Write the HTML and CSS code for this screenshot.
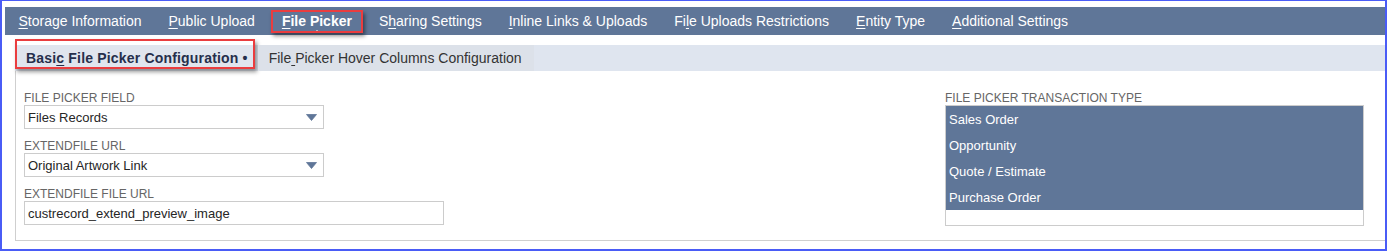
FILE: index.html
```html
<!DOCTYPE html>
<html>
<head>
<meta charset="utf-8">
<link rel="stylesheet" href="styles.css">
</head>
<body>
<div class="frame">
  <nav class="tabs">
    <span class="tab"><u>S</u>torage Information</span>
    <span class="tab"><u>P</u>ublic Upload</span>
    <span class="tab active"><u>F</u>ile Picker<span class="caret"></span></span>
    <span class="tab">S<u>h</u>aring Settings</span>
    <span class="tab"><u>I</u>nline Links &amp; Uploads</span>
    <span class="tab">Fi<u>l</u>e Uploads Restrictions</span>
    <span class="tab"><u>E</u>ntity Type</span>
    <span class="tab"><u>A</u>dditional Settings</span>
  </nav>
  <div class="subtabs">
    <span class="subtab active">Basi<u>c</u> File Picker Configuration •</span>
    <span class="subtab">File<u> </u>Picker Hover Columns Configuration</span>
  </div>
  <div class="panel">
    <div class="col col-left">
      <div class="field">
        <div class="label">FILE PICKER FIELD</div>
        <div class="select"><span>Files Records</span>
          <svg class="arrow" width="11" height="7" viewBox="0 0 11 7"><polygon points="0.5,0.5 10.5,0.5 5.5,6.5" fill="#5f7698" stroke="#5f7698" stroke-width="0.8" stroke-linejoin="round"/></svg>
        </div>
      </div>
      <div class="field">
        <div class="label">EXTENDFILE URL</div>
        <div class="select"><span>Original Artwork Link</span>
          <svg class="arrow" width="11" height="7" viewBox="0 0 11 7"><polygon points="0.5,0.5 10.5,0.5 5.5,6.5" fill="#5f7698" stroke="#5f7698" stroke-width="0.8" stroke-linejoin="round"/></svg>
        </div>
      </div>
      <div class="field">
        <div class="label">EXTENDFILE FILE URL</div>
        <div class="input">custrecord_extend_preview_image</div>
      </div>
    </div>
    <div class="col col-right">
      <div class="label">FILE PICKER TRANSACTION TYPE</div>
      <div class="listbox">
        <div class="opt">Sales Order</div>
        <div class="opt">Opportunity</div>
        <div class="opt">Quote / Estimate</div>
        <div class="opt">Purchase Order</div>
      </div>
    </div>
  </div>
</div>
</body>
</html>
```

FILE: styles.css
```css
* { box-sizing: border-box; }
html, body { margin: 0; padding: 0; background: #fff; }
body { font-family: "Liberation Sans", Arial, sans-serif; }

.frame {
  width: 1387px;
  height: 251px;
  border-style: solid;
  border-color: #4a5cf6;
  border-width: 1px 2px 2px 2px;
  padding: 6px 0 0 3px;
}

.tabs {
  height: 28px;
  background: #5f7698;
  display: flex;
  align-items: flex-start;
  margin-bottom: 10px;
}
.tab {
  position: relative;
  color: #fff;
  font-size: 14px;
  padding: 1px 13.5px 0;
  height: 28px;
  line-height: 27px;
  white-space: nowrap;
}
.tab u { text-decoration-thickness: 1px; text-underline-offset: 2px; }
.tab.active { font-weight: bold; }
.tab.active::after {
  content: "";
  position: absolute;
  left: 2.5px;
  right: 2.5px;
  top: 3px;
  bottom: 2px;
  border: 2.5px solid #ea3d3f;
  box-shadow: 2px 3px 4px rgba(0,0,0,0.45);
}
.caret {
  position: absolute;
  left: 50%;
  bottom: 2px;
  margin-left: -3px;
  width: 0;
  height: 0;
  border-left: 3px solid transparent;
  border-right: 3px solid transparent;
  border-bottom: 3px solid #fff;
}

.subtabs {
  margin-left: 10px;
  height: 26px;
  background: #dfe5ef;
  display: flex;
  align-items: stretch;
}
.subtab {
  position: relative;
  font-size: 14px;
  line-height: 26px;
  padding: 0 12px 0 11px;
  color: #333;
  background: #dce1e9;
  white-space: nowrap;
}
.subtab.active {
  font-weight: bold;
  color: #262f4c;
  background: #e0e5ee;
  letter-spacing: 0.18px;
  padding-right: 10px;
}
.subtab.active::after {
  content: "";
  position: absolute;
  left: 0;
  right: 3px;
  top: -6px;
  bottom: 2px;
  border: 2.5px solid #ea3d3f;
  box-shadow: 2px 3px 4px rgba(0,0,0,0.4);
}
.subtab u { text-underline-offset: 2px; }

.panel {
  margin-left: 10px;
  height: 170px;
  border-left: 1px solid #cfcfcf;
  border-bottom: 1px solid #cfcfcf;
  padding: 20px 0 0 8px;
  display: flex;
}
.col-left { width: 921px; }
.col-right { width: 419px; }

.field { margin-bottom: 10px; }
.label {
  font-size: 12px;
  line-height: 14px;
  color: #666;
  height: 14px;
}
.select, .input {
  height: 24px;
  border: 1px solid #cccccc;
  font-size: 13px;
  color: #262626;
  padding-left: 3px;
  display: flex;
  align-items: center;
  position: relative;
}
.select { width: 300px; }
.input { width: 420px; }
.arrow {
  position: absolute;
  right: 6px;
  top: 8px;
}

.listbox {
  width: 419px;
  height: 121px;
  border: 1px solid #cccccc;
  background: #fff;
}
.opt {
  height: 26px;
  padding-top: 1px;
  line-height: 25px;
  background: #5f7698;
  color: #fff;
  font-size: 13px;
  padding-left: 3px;
}
```
